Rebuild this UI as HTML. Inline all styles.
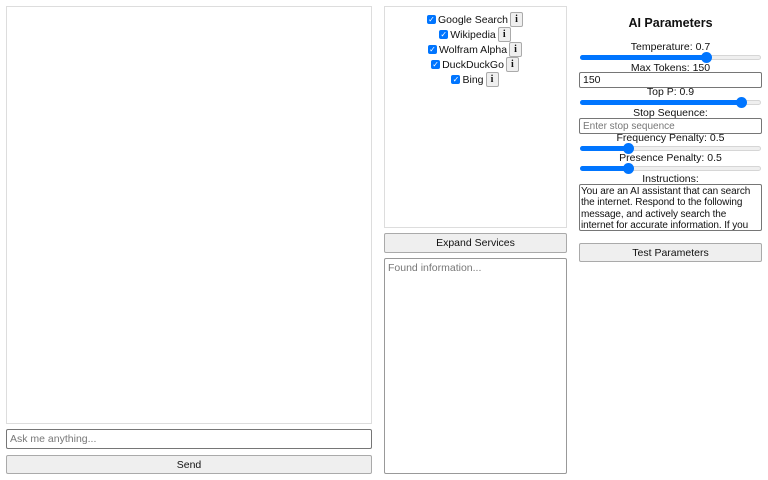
<!DOCTYPE html>
<html><head><style>
*{box-sizing:border-box;margin:0;padding:0}
body{width:768px;height:480px;background:#fff;font-family:"Liberation Sans",Arial,sans-serif;font-size:10.5px;color:#111;position:relative;overflow:hidden}
.a{position:absolute}
.box{border:1px solid #ddd;background:#fff}
.inp{border:1px solid #767676;border-radius:2px;background:#fff;padding:0 3px;display:flex;align-items:center}
.btn{border:1px solid #aaa;background:#efefef;border-radius:2px;display:flex;align-items:center;justify-content:center;font-size:10.5px}
.lbl{left:579px;width:183px;text-align:center;font-size:10.5px;line-height:12px}
.tr{left:580px;width:181px;height:5px;background:#efefef;border:1px solid #d6d6d6;border-radius:3px}
.fill{position:absolute;left:-1px;top:-1px;height:5px;background:#0075ff;border-radius:3px}
.th{position:absolute;top:-4px;width:11px;height:11px;border-radius:50%;background:#0075ff}
.svc{position:absolute;left:384px;width:182px;text-align:center;font-size:10.5px;line-height:14px;height:15px;display:flex;justify-content:center;align-items:center}
.cb{display:inline-block;width:9px;height:9px;background:#0075ff;border-radius:2px;color:#fff;font-size:8px;line-height:9px;text-align:center;margin-right:2px}
.i{display:inline-block;width:13px;height:15px;border:1px solid #aaa;background:#efefef;border-radius:2px;margin-left:2px;font-weight:bold;font-size:10px;line-height:13px;text-align:center;font-family:"Liberation Serif",serif}
.ph{color:#777}
</style></head><body>
<div class="a box" style="left:6px;top:6px;width:366px;height:418px"></div>
<div class="a inp ph" style="left:6px;top:429px;width:366px;height:20px">Ask me anything...</div>
<div class="a btn" style="left:6px;top:455px;width:366px;height:19px">Send</div>

<div class="a box" style="left:384px;top:6px;width:183px;height:222px"></div>
<div class="svc" style="top:12px"><span class="cb">✓</span>Google Search<span class="i">i</span></div>
<div class="svc" style="top:27px"><span class="cb">✓</span>Wikipedia<span class="i">i</span></div>
<div class="svc" style="top:42px"><span class="cb">✓</span>Wolfram Alpha<span class="i">i</span></div>
<div class="svc" style="top:57px"><span class="cb">✓</span>DuckDuckGo<span class="i">i</span></div>
<div class="svc" style="top:72px"><span class="cb">✓</span>Bing<span class="i">i</span></div>
<div class="a btn" style="left:384px;top:233px;width:183px;height:20px">Expand Services</div>
<div class="a inp ph" style="left:384px;top:258px;width:183px;height:216px;align-items:flex-start;padding-top:3px;border-color:#999">Found information...</div>

<div class="a" style="left:579px;top:16px;width:183px;text-align:center;font-weight:bold;font-size:12.5px">AI Parameters</div>
<div class="a lbl" style="top:41px">Temperature: 0.7</div>
<div class="a tr" style="top:55px"><div class="fill" style="width:127px"></div><div class="th" style="left:120px"></div></div>
<div class="a lbl" style="top:62px">Max Tokens: 150</div>
<div class="a inp" style="left:579px;top:72px;width:183px;height:16px">150</div>
<div class="a lbl" style="top:86px">Top P: 0.9</div>
<div class="a tr" style="top:100px"><div class="fill" style="width:162px"></div><div class="th" style="left:155px"></div></div>
<div class="a lbl" style="top:107px">Stop Sequence:</div>
<div class="a inp ph" style="left:579px;top:118px;width:183px;height:16px;font-size:10px">Enter stop sequence</div>
<div class="a lbl" style="top:132px">Frequency Penalty: 0.5</div>
<div class="a tr" style="top:146px"><div class="fill" style="width:49px"></div><div class="th" style="left:42px"></div></div>
<div class="a lbl" style="top:152px">Presence Penalty: 0.5</div>
<div class="a tr" style="top:166px"><div class="fill" style="width:49px"></div><div class="th" style="left:42px"></div></div>
<div class="a lbl" style="top:173px">Instructions:</div>
<div class="a" style="left:579px;top:184px;width:183px;height:47px;border:1px solid #767676;border-radius:2px;padding:1px 1px;font-size:10px;line-height:11.3px;overflow:hidden;letter-spacing:-0.1px">You are an AI assistant that can search the internet. Respond to the following message, and actively search the internet for accurate information. If you mention</div>
<div class="a btn" style="left:579px;top:243px;width:183px;height:19px">Test Parameters</div>
</body></html>
